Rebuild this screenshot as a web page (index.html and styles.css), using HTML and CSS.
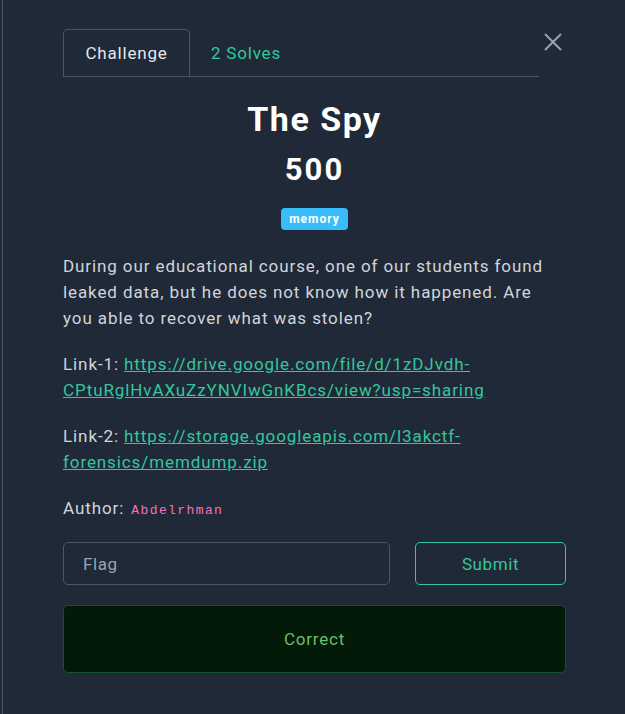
FILE: index.html
```html
<!DOCTYPE html>
<html lang="en">
<head>
    <meta charset="UTF-8">
    <meta name="viewport" content="width=device-width, initial-scale=1.0">
    <title>The Spy</title>
    <link rel="stylesheet" href="styles.css">
</head>
<body>
    <div class="modal">
        <div class="modal-body">
            <div class="modal-head">
                <div class="nav-tabs">
                    <div class="tab active">Challenge</div>
                    <div class="tab solves">2 Solves</div>
                </div>
                <button class="close-btn" aria-label="Close">
                    <svg width="20" height="20" viewBox="0 0 20 20">
                        <path d="M2 2 L18 18 M18 2 L2 18" stroke="#9ca3af" stroke-width="2" fill="none"/>
                    </svg>
                </button>
            </div>

            <h2 class="challenge-name">The Spy</h2>
            <h3 class="challenge-value">500</h3>
            <div class="tags">
                <span class="badge">memory</span>
            </div>

            <div class="description">
                <p>During our educational course, one of our students found leaked data, but he does not know how it happened. Are you able to recover what was stolen?</p>
                <p>Link-1: <a href="#">https://drive.google.com/file/d/1zDJvdh-CPtuRglHvAXuZzYNVIwGnKBcs/view?usp=sharing</a></p>
                <p>Link-2: <a href="#">https://storage.googleapis.com/l3akctf-forensics/memdump.zip</a></p>
                <p class="author">Author: <code>Abdelrhman</code></p>
            </div>

            <form class="flag-form">
                <input type="text" class="flag-input" placeholder="Flag">
                <button type="submit" class="submit-btn">Submit</button>
            </form>

            <div class="notification">Correct</div>
        </div>
    </div>
</body>
</html>
```

FILE: styles.css
```css
* {
    margin: 0;
    padding: 0;
    box-sizing: border-box;
}

body {
    font-family: 'Roboto', 'Noto Sans', sans-serif;
    background: #1f2937;
    color: #d1d5db;
    padding-left: 2px;
}

.modal {
    min-height: 714px;
    border-left: 1px solid #4b5563;
}

.modal-body {
    width: 503px;
    margin-left: 60px;
    padding-top: 29px;
}

.modal-head {
    display: flex;
    align-items: flex-start;
}

.nav-tabs {
    display: flex;
    width: 476px;
    border-bottom: 1px solid #4b5563;
}

.tab {
    height: 47px;
    padding: 0 21px;
    display: flex;
    align-items: center;
    font-size: 17px;
    color: #e5e7eb;
    letter-spacing: 0.8px;
}

.tab.active {
    width: 127px;
    justify-content: center;
    border: 1px solid #4b5563;
    border-bottom: none;
    border-radius: 5px 5px 0 0;
}

.tab.solves {
    color: #34c79c;
}

.close-btn {
    background: none;
    border: none;
    margin: 3px 0 0 4px;
    cursor: pointer;
}

.challenge-name {
    text-align: center;
    font-size: 34px;
    font-weight: 700;
    color: #fff;
    margin-top: 20px;
    line-height: 44px;
    letter-spacing: 1.5px;
}

.challenge-value {
    text-align: center;
    font-size: 31px;
    font-weight: 700;
    color: #fff;
    margin-top: 9px;
    line-height: 40px;
    letter-spacing: 2px;
}

.tags {
    text-align: center;
    margin-top: 18px;
    line-height: 22px;
}

.badge {
    display: inline-block;
    background: #38bdf8;
    color: #fff;
    font-size: 12px;
    font-weight: 700;
    padding: 3px 8px;
    border-radius: 4px;
    letter-spacing: 1px;
    line-height: 16px;
    vertical-align: top;
}

.description {
    margin-top: 23px;
    font-size: 17px;
    line-height: 26px;
    letter-spacing: 0.9px;
}

.description p {
    margin-bottom: 20px;
}

.description a {
    color: #34c79c;
    text-decoration: underline;
}

.author code {
    font-family: 'Liberation Mono', monospace;
    font-size: 13px;
    color: #f472b6;
    letter-spacing: 1.4px;
    margin-left: 2px;
}

.flag-form {
    display: flex;
    justify-content: space-between;
    margin-top: -2px;
}

.flag-input {
    width: 327px;
    height: 43px;
    background: transparent;
    border: 1px solid #4b5563;
    border-radius: 5px;
    padding: 0 19px;
    font-family: inherit;
    font-size: 17px;
    letter-spacing: 0.6px;
    color: #e5e7eb;
}

.flag-input::placeholder {
    color: #9ca3af;
}

.submit-btn {
    width: 151px;
    height: 43px;
    background: transparent;
    border: 1px solid #34c79c;
    border-radius: 5px;
    color: #34c79c;
    font-family: inherit;
    font-size: 17px;
    letter-spacing: 0.6px;
}

.notification {
    margin-top: 20px;
    height: 68px;
    display: flex;
    align-items: center;
    justify-content: center;
    background: #021a07;
    border: 1px solid #14532d;
    border-radius: 5px;
    color: #6abf69;
    font-size: 17px;
    letter-spacing: 0.8px;
}
```
